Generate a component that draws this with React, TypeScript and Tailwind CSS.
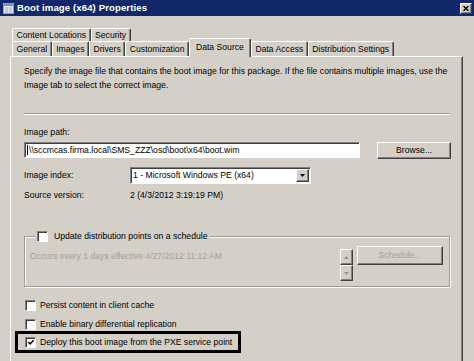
import React from "react";

const raised =
  "border border-t-white border-l-white border-r-[#404040] border-b-[#404040] shadow-[inset_-1px_-1px_0_#808080] bg-[#d4d0c8]";
const sunken =
  "border border-t-[#808080] border-l-[#808080] border-r-white border-b-white shadow-[inset_1px_1px_0_#404040] bg-white";

function Check({ checked = false }: { checked?: boolean }) {
  return (
    <span className={`inline-flex h-[11px] w-[11px] shrink-0 items-center justify-center ${sunken}`}>
      {checked && (
        <svg width="9" height="9" viewBox="0 0 9 9" className="ml-[1px] mt-[1px]">
          <path d="M1.5 4 L3.5 6 L7.5 2" fill="none" stroke="#000" strokeWidth="1.7" />
        </svg>
      )}
    </span>
  );
}

function Tab({ label, selected = false }: { label: string; selected?: boolean }) {
  if (selected) {
    return (
      <div className="relative z-10 -mb-[1px] flex h-[19px] items-center rounded-t-[2px] border-l border-t border-l-white border-t-white border-r border-r-[#404040] bg-[#d4d0c8] px-[6px] pb-[2px] shadow-[inset_-1px_0_0_#808080]">
        {label}
      </div>
    );
  }
  return (
    <div className="flex h-full items-center rounded-t-[2px] border-l border-t border-l-white border-t-white border-r border-r-[#404040] px-[3.5px] shadow-[inset_-1px_0_0_#808080]">
      {label}
    </div>
  );
}

function Arrow({ up }: { up?: boolean }) {
  return (
    <div className={`flex h-[16px] w-[13px] items-center justify-center ${raised}`}>
      <svg width="5" height="3" viewBox="0 0 5 3">
        <path d={up ? "M0 3 L2.5 0 L5 3 Z" : "M0 0 L2.5 3 L5 0 Z"} fill="#9a968e" />
      </svg>
    </div>
  );
}

export default function App() {
  return (
    <div className="h-[361px] w-[474px] overflow-hidden bg-[#d4d0c8] font-['Liberation_Sans',Arial,sans-serif] text-[8.65px] text-black">
      {/* Title bar */}
      <div className="flex h-[16px] items-center bg-[#13286b] pl-[3px] pr-[2px]">
        <svg width="11" height="11" viewBox="0 0 11 11">
          <rect x="0.5" y="0.5" width="10" height="10" fill="#dfe6f2" stroke="#8aa0c8" />
          <rect x="1" y="1" width="9" height="2" fill="#6f8fc6" />
          <path d="M2 5h3M2 7h3M2 9h3M6 5h3M6 7h3M6 9h3" stroke="#9fb2d6" strokeWidth="1" />
        </svg>
        <span className="ml-[3px] text-[9.6px] font-bold tracking-[0.1px] text-white">Boot image (x64) Properties</span>
        <div className={`ml-auto flex h-[11px] w-[12px] items-center justify-center ${raised}`}>
          <svg width="6" height="5" viewBox="0 0 6 5">
            <path d="M0.5 0 L5.5 5 M5.5 0 L0.5 5" stroke="#000" strokeWidth="1.4" />
          </svg>
        </div>
      </div>

      {/* Tabs */}
      <div className="pl-[12px] pt-[12px]">
        <div className="flex h-[13px]">
          <Tab label="Content Locations" />
          <Tab label="Security" />
        </div>
        <div className="flex h-[15px] items-end">
          <div className="flex h-[15px]">
            <Tab label="General" />
            <Tab label="Images" />
            <Tab label="Drivers" />
            <Tab label="Customization" />
          </div>
          <Tab label="Data Source" selected />
          <div className="flex h-[15px]">
            <Tab label="Data Access" />
            <Tab label="Distribution Settings" />
          </div>
        </div>
      </div>

      {/* Panel */}
      <div className="ml-[10px] h-[320px] w-[453px] border-l border-t border-r border-l-white border-t-white border-r-[#404040] pl-[13px] pr-[11px] pt-[7px] shadow-[inset_-1px_0_0_#808080]">
        <div className="whitespace-nowrap leading-[14px]">
          <div>Specify the image file that contains the boot image for this package. If the file contains multiple images, use the</div>
          <div>Image tab to select the correct image.</div>
        </div>

        <div className="mr-[1px] mt-[21px] h-[2px] border-t border-b border-t-[#a09c94] border-b-white" />

        <div className="mt-[10px] leading-[14px]">Image path:</div>
        <div className="mt-[3px] flex items-start">
          <div className={`flex h-[16px] w-[336px] items-center pl-[2px] ${sunken}`}>
            <span className="mr-[1px] h-[10px] w-px bg-black" />
            <span className="whitespace-nowrap">{"\\\\sccmcas.firma.local\\SMS_ZZZ\\osd\\boot\\x64\\boot.wim"}</span>
          </div>
          <div className={`ml-auto flex h-[17px] w-[74px] items-center justify-center ${raised}`}>Browse...</div>
        </div>

        <div className="mt-[8px] flex h-[17px] items-center">
          <div className="w-[106px]">Image index:</div>
          <div className={`flex h-[17px] w-[181px] items-center pl-[2px] pr-[1px] ${sunken}`}>
            <span className="flex-1 whitespace-nowrap">1 - Microsoft Windows PE (x64)</span>
            <div className={`flex h-[13px] w-[13px] items-center justify-center ${raised}`}>
              <svg width="5" height="3" viewBox="0 0 5 3">
                <path d="M0 0 L2.5 3 L5 0 Z" fill="#000" />
              </svg>
            </div>
          </div>
        </div>

        <div className="mt-[4px] flex leading-[14px]">
          <div className="w-[106px]">Source version:</div>
          <div>2 (4/3/2012 3:19:19 PM)</div>
        </div>

        {/* Group box */}
        <div className="mr-[1px] mt-[34px] border border-[#a09c94] pb-[5px] shadow-[inset_1px_1px_0_white,1px_1px_0_white]">
          <div className="-mt-[7px] ml-[10px] flex h-[13px] w-fit items-center gap-[6px] bg-[#d4d0c8] pl-[2px] pr-[3px]">
            <Check />
            <span>Update distribution points on a schedule</span>
          </div>
          <div className="mt-[3px] flex items-start pl-[5px] pr-[6px]">
            <div className="mt-[3px] flex-1 leading-[14px] text-[#a3a099]">
              Occurs every 1 days effective 4/27/2012 11:12 AM
            </div>
            <div className="mt-[3px] flex flex-col">
              <Arrow up />
              <Arrow />
            </div>
            <div className={`ml-[4px] flex h-[19px] w-[86px] items-center justify-center text-[#a3a099] ${raised}`}>
              Schedule...
            </div>
          </div>
        </div>

        <div className="mt-[11px] flex h-[14px] items-center gap-[4px] pl-[1px]">
          <Check />
          <span>Persist content in client cache</span>
        </div>
        <div className="mt-[5px] flex h-[14px] items-center gap-[4px] pl-[1px]">
          <Check />
          <span>Enable binary differential replication</span>
        </div>
        <div className="-ml-[9px] flex h-[22px] w-[226px] items-center gap-[4px] border-[3px] border-black pl-[7px]">
          <Check checked />
          <span>Deploy this boot image from the PXE service point</span>
        </div>
      </div>
    </div>
  );
}
